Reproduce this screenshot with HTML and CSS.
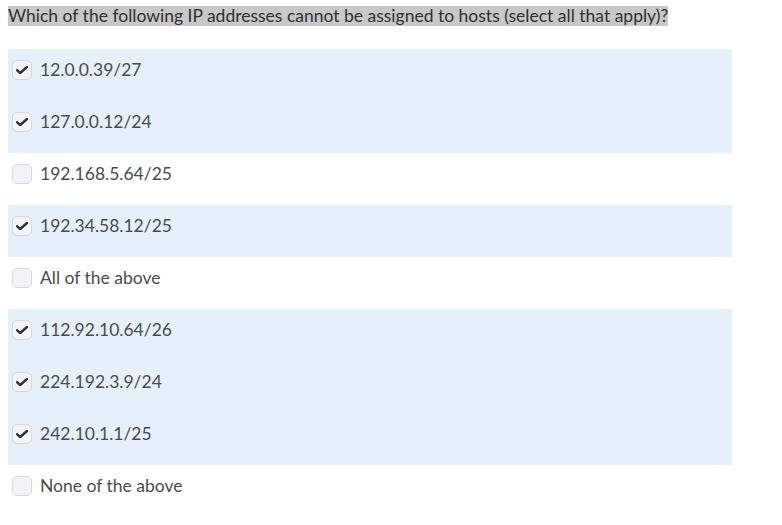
FILE: index.html
```html
<!DOCTYPE html>
<html>
<head>
<meta charset="utf-8">
<link rel="stylesheet" href="styles.css">
</head>
<body>
<div class="question"><span class="title">Which of the following IP addresses cannot be assigned to hosts (select all that apply)?</span></div>
<ul class="options">
  <li class="opt sel"><span class="box"><svg class="tick" viewBox="0 0 12 8"><path d="M1 4.2 L4.2 7 L11 1"/></svg></span><span class="label">12.0.0.39/27</span></li>
  <li class="opt sel"><span class="box"><svg class="tick" viewBox="0 0 12 8"><path d="M1 4.2 L4.2 7 L11 1"/></svg></span><span class="label">127.0.0.12/24</span></li>
  <li class="opt"><span class="box"></span><span class="label">192.168.5.64/25</span></li>
  <li class="opt sel"><span class="box"><svg class="tick" viewBox="0 0 12 8"><path d="M1 4.2 L4.2 7 L11 1"/></svg></span><span class="label">192.34.58.12/25</span></li>
  <li class="opt"><span class="box"></span><span class="label">All of the above</span></li>
  <li class="opt sel"><span class="box"><svg class="tick" viewBox="0 0 12 8"><path d="M1 4.2 L4.2 7 L11 1"/></svg></span><span class="label">112.92.10.64/26</span></li>
  <li class="opt sel"><span class="box"><svg class="tick" viewBox="0 0 12 8"><path d="M1 4.2 L4.2 7 L11 1"/></svg></span><span class="label">224.192.3.9/24</span></li>
  <li class="opt sel"><span class="box"><svg class="tick" viewBox="0 0 12 8"><path d="M1 4.2 L4.2 7 L11 1"/></svg></span><span class="label">242.10.1.1/25</span></li>
  <li class="opt"><span class="box"></span><span class="label">None of the above</span></li>
</ul>
</body>
</html>
```
FILE: styles.css
```css
html, body { margin: 0; padding: 0; background: #fff; }
body {
  padding: 6px 8px 0 8px;
  font-family: Lato, "Liberation Sans", sans-serif;
  color: #494c4e;
}
.question { height: 20px; line-height: 20px; font-size: 17.5px; }
.title { background: #c8c8c8; color: #2f3133; display: inline-block; height: 20px; }
.options { list-style: none; margin: 23px 0 0 0; padding: 0; width: 724px; }
.opt {
  height: 52px;
  display: flex;
  align-items: flex-start;
  padding: 11px 0 0 4px;
  box-sizing: border-box;
  font-size: 17.5px;
}
.opt.sel { background: #e6f0fb; }
.box {
  width: 20px; height: 20px;
  box-sizing: border-box;
  border: 1px solid #d3d9e3;
  border-radius: 5px;
  background: #f1f3f6;
  margin-right: 8px;
  flex: none;
  display: flex;
  align-items: center;
  justify-content: center;
}
.tick { width: 12px; height: 8px; display: block; }
.tick path { fill: none; stroke: #333; stroke-width: 2.4; stroke-linecap: round; stroke-linejoin: round; }
.label { line-height: 20px; color: #494c4e; }
```
